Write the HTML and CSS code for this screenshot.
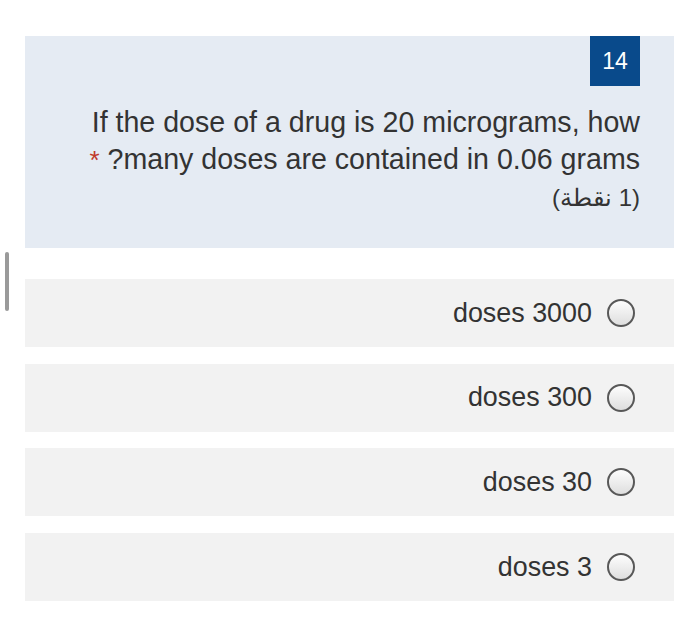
FILE: index.html
```html
<!DOCTYPE html>
<html lang="en">
<head>
<meta charset="utf-8">
<link rel="stylesheet" href="styles.css">
</head>
<body>
<div class="scrollbar"></div>
<main class="form">
  <section class="question-card">
    <div class="badge-row"><span class="badge">14</span></div>
    <div class="question">
      <div class="line">If the dose of a drug is 20 micrograms, how</div>
      <div class="line"><span class="req">*</span> ?many doses are contained in 0.06 grams</div>
      <div class="line points" dir="rtl">(1 نقطة)</div>
    </div>
  </section>
  <section class="options">
    <label class="option"><span class="opt-text">doses 3000</span><span class="radio"></span></label>
    <label class="option"><span class="opt-text">doses 300</span><span class="radio"></span></label>
    <label class="option"><span class="opt-text">doses 30</span><span class="radio"></span></label>
    <label class="option"><span class="opt-text">doses 3</span><span class="radio"></span></label>
  </section>
</main>
</body>
</html>
```
FILE: styles.css
```css
html, body {
  margin: 0;
  padding: 0;
  background: #ffffff;
}
body {
  font-family: "Liberation Sans", Arial, sans-serif;
  color: #333333;
  width: 700px;
  height: 632px;
  position: relative;
  overflow: hidden;
}
.scrollbar {
  position: absolute;
  left: 5px;
  top: 252px;
  width: 4px;
  height: 59px;
  border-radius: 2px;
  background: #9a9a9a;
}
.form {
  padding: 36px 26px 0 25px;
  display: flex;
  flex-direction: column;
}
.question-card {
  background: #e5ebf3;
  height: 212px;
  box-sizing: border-box;
  padding: 0 34px 0 34px;
  display: flex;
  flex-direction: column;
}
.badge-row {
  display: flex;
  justify-content: flex-end;
}
.badge {
  width: 50px;
  height: 50px;
  background: #094a8b;
  color: #ffffff;
  font-size: 23px;
  display: flex;
  align-items: center;
  justify-content: center;
}
.question {
  margin-top: 18px;
  display: flex;
  flex-direction: column;
  align-items: flex-end;
  font-size: 28.6px;
  line-height: 37px;
  color: #333333;
}
.line {
  white-space: nowrap;
}
.req {
  color: #c0392b;
  font-size: 26px;
}
.points {
  font-size: 24px;
}
.options {
  margin-top: 31px;
  display: flex;
  flex-direction: column;
  gap: 16.7px;
}
.option {
  height: 68px;
  background: #f2f2f2;
  display: flex;
  align-items: center;
  justify-content: flex-end;
  padding-right: 39px;
  gap: 15px;
}
.opt-text {
  font-size: 26.9px;
  color: #333333;
}
.radio {
  width: 28px;
  height: 28px;
  box-sizing: border-box;
  border-radius: 50%;
  border: 2px solid #585858;
  background: linear-gradient(180deg, #fdfdfd 0%, #dedede 100%);
}
```
